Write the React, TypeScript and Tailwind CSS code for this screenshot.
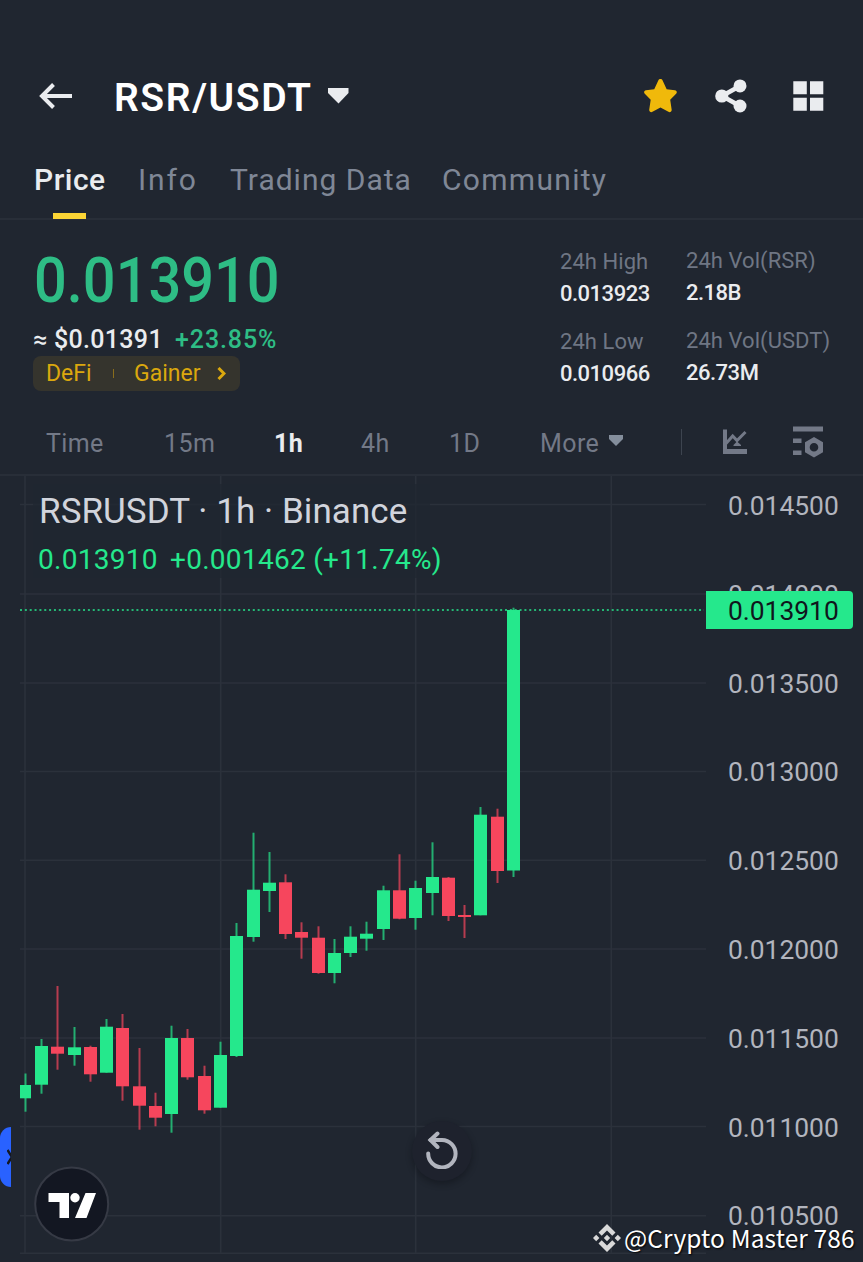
import { useState } from "react";

type Candle = {
  open: number,
  close: number,
  high: number,
  low: number,
  up: boolean,
}

const GREEN = "#25E88C";
const RED = "#F6465D";

//=============  CHART DATA =============
// top of body, bottom of body, wick top, wick bottom (chart pixels)
const rows: [number, number, number, number, boolean][] = [
  [609, 622.3, 597.5, 635.7, true],
  [570, 608.7, 563, 617.7, true],
  [570.7, 577.7, 510, 593.7, false],
  [571.3, 579, 551, 589.7, true],
  [571, 598.3, 569.7, 605.7, false],
  [550.7, 596.7, 543, 596.7, true],
  [552, 610.3, 538, 624.7, false],
  [610.3, 629.7, 572, 653.7, false],
  [630, 641.7, 616.7, 650.3, false],
  [562, 638, 549.7, 656.7, true],
  [562, 601.3, 553, 603.7, false],
  [600, 634.3, 589.7, 637.7, false],
  [579, 631.7, 565.7, 631.7, true],
  [460, 580, 447, 581, true],
  [413.7, 461, 356.7, 465.7, true],
  [406.7, 415, 376, 436, true],
  [406.3, 458, 398.3, 463, false],
  [456, 461.7, 446.3, 482.7, false],
  [461.7, 497, 450.3, 497.7, false],
  [477, 497, 463, 507.3, true],
  [460.7, 477, 450.3, 481, true],
  [457.7, 462.7, 445.7, 474.7, true],
  [414.3, 453, 409.7, 464, true],
  [414.3, 442.7, 378.3, 443.3, false],
  [412, 442, 404.7, 453.7, true],
  [401, 417, 366.3, 439.3, true],
  [401.7, 440, 401, 445, false],
  [439, 441, 429, 462, false],
  [338.7, 439.3, 331, 439.3, true],
  [340.7, 395, 332.7, 407, false],
  [134, 394.5, 131.7, 401, true],
];

const candles: Candle[] = rows.map(([open, close, high, low, up]) => ({ open, close, high, low, up }));

const gridY = [28.5, 118, 207, 295.5, 384.3, 473, 562, 650.5, 739.7];
const gridX = [25, 220.7, 415.7, 611.3];
const axisPrices = ["0.014500", "0.014000", "0.013500", "0.013000", "0.012500", "0.012000", "0.011500", "0.011000", "0.010500"];

const tabs = [
  { name: "Price", cell: "w-[104px]", text: "tracking-[0.5px]" },
  { name: "Info", cell: "w-[92px]", text: "tracking-[1.9px]" },
  { name: "Trading Data", cell: "w-[212px]", text: "tracking-[1px]" },
  { name: "Community", cell: "w-[170px]", text: "tracking-[1.3px]" },
];

const intervals = [
  { name: "Time", cell: "w-[118px]" },
  { name: "15m", cell: "w-[110px]" },
  { name: "1h", cell: "w-[87px]" },
  { name: "4h", cell: "w-[88px]" },
  { name: "1D", cell: "w-[91px]" },
];

//=============  HEADER =============
const Header = () => (
  <header className="flex h-[152px] items-center pt-[40px] pl-[39px] pr-[39px]">
    <svg width="34" height="26" viewBox="0 0 34 26" fill="none" stroke="#EAECEF" strokeWidth="4">
      <path d="M14.5 1.5 3 13l11.5 11.5M3 13h30" />
    </svg>
    <h1 className="ml-[41px] w-[198px] whitespace-nowrap pt-1 text-[39px] font-semibold leading-none tracking-[1.6px] text-white">RSR/USDT</h1>
    <svg className="ml-[16px]" width="21" height="16" viewBox="0 0 21 16" fill="#EAECEF">
      <path d="M0 0H20.500V5L10.500 15.500 0 5Z" />
    </svg>
    <div className="ml-auto flex items-center">
      <svg width="33" height="34" viewBox="0.300 0.600 33.500 34" fill="#F0B90B">
        <path d="M14.8 1.8c.9-1.8 3.500-1.800 4.400 0l4.100 8.900 8.400 1c1.900.3 2.500 2.400 1.200 3.700l-6 6 1.500 10.200c.2 1.900-1.700 3-3.300 2.100L17 29.200l-8.100 4.500c-1.600.9-3.500-.2-3.300-2.100l1.500-10.200-6-6c-1.300-1.300-.7-3.400 1.200-3.700l8.400-1Z" />
      </svg>
      <svg className="ml-[38px]" width="33" height="34" viewBox="0 0 33 34" fill="#EAECEF">
        <path d="M7 17 25 7M7 17l18 10" stroke="#EAECEF" strokeWidth="4.5" />
        <circle cx="6.800" cy="17" r="6.600" />
        <circle cx="25" cy="6.900" r="6.500" />
        <circle cx="25" cy="27" r="6.500" />
      </svg>
      <svg className="ml-[45px]" width="31" height="30" viewBox="0 0 31 30" fill="#EAECEF">
        <path d="M0.300 0.300h13.500v13H0.300zM17 0.300h13.300v13H17zM0.300 16.700h13.500v13H0.300zM17 16.700h13.300v13H17z" />
      </svg>
    </div>
  </header>
)

//=============  PRICE SUMMARY =============
const Stat = ({ label, value }: { label: string, value: string }) => (
  <div className="h-[80px] whitespace-nowrap">
    <p className="text-[22px] leading-[32px] tracking-[0.05px] text-[#6F7684]">{label}</p>
    <p className="text-[22px] font-medium leading-[31px] tracking-[-0.5px] text-[#EAECEF]">{value}</p>
  </div>
)

const Summary = () => (
  <section className="flex h-[190px] pl-[33px]">
    <div className="w-[527px]">
      <p className="mt-[27px] h-[66px] w-[250px] origin-left translate-x-px scale-x-[0.916] whitespace-nowrap text-[63px] font-medium leading-[68px] text-[#2EBD85]">0.013910</p>
      <div className="mt-[12px] flex h-[28px] items-center whitespace-nowrap text-[25px] font-medium leading-none">
        <span className="w-[142px] tracking-[0.3px] text-[#EAECEF]">≈ $0.01391</span>
        <span className="tracking-[0.9px] text-[#2EBD85]">+23.85%</span>
      </div>
      <div className="mt-[3px] flex h-[35px] w-[207px] items-center rounded-lg bg-[#35342D] pl-[13px] text-[23px] leading-none text-[#DBA80E]">
        <span className="w-[67px]">DeFi</span>
        <span className="h-[9px] w-px bg-[#8A6D1B]" />
        <span className="ml-[20px] w-[83px]">Gainer</span>
        <svg width="9" height="13" viewBox="0 0 9 13" fill="none" stroke="#DBA80E" strokeWidth="3">
          <path d="M1.500 1 7 6.500 1.500 12" />
        </svg>
      </div>
    </div>
    <div className="w-[126px] pt-[26px]">
      <Stat label="24h High" value="0.013923" />
      <Stat label="24h Low" value="0.010966" />
    </div>
    <div className="pt-[25px]">
      <Stat label="24h Vol(RSR)" value="2.18B" />
      <Stat label="24h Vol(USDT)" value="26.73M" />
    </div>
  </section>
)

//=============  CHART =============
const Chart = () => (
  <section className="relative flex h-[786px] overflow-hidden font-[Roboto,sans-serif]">
    <svg className="shrink-0" width="706" height="786" viewBox="0 0 706 786">
      {gridY.map((y) => <path key={y} d={`M20 ${y}H706`} stroke="#2B313B" strokeWidth="1.600" />)}
      {gridX.map((x) => <path key={x} d={`M${x} 0V777`} stroke="#2B313B" strokeWidth="1.600" />)}
      <path d="M20 777.300H706" stroke="#2B313B" strokeWidth="1.600" />
      <rect x="33" y="8" width="397" height="94" fill="#202630" fillOpacity="0.700" />
      <path d="M20 134H704" stroke={GREEN} strokeOpacity="0.750" strokeWidth="2" strokeDasharray="2 2.850" />
      {candles.map((c, i) => {
        const x = Math.round(18.75 + i * 16.27)
        const color = c.up ? GREEN : RED
        // first candle is cut by the left edge of the pane
        const left = i === 0 ? 20 : x
        const width = i === 0 ? 11 : 13
        return (
          <g key={i} fill={color}>
            <rect x={x + 5.5} y={c.high} width="2" height={c.low - c.high} opacity="0.700" />
            <rect x={left} y={c.open} width={width} height={c.close - c.open} />
          </g>
        )
      })}
    </svg>
    <div className="-mt-[14px] pl-[22px] text-[26.4px] text-[#B2B5BE]">
      {axisPrices.map((price) => (
        <p key={price} className="h-[88.8px] leading-[89px]">{price}</p>
      ))}
    </div>

    <div className="absolute left-[38px] top-[15px] whitespace-nowrap">
      <p className="ml-px text-[35px] leading-[42px] tracking-[0.06px] text-[#D1D4DC]">RSRUSDT · 1h · Binance</p>
      <p className="mt-[9px] flex text-[28px] leading-[36px] tracking-[0.28px] text-[#25E88C]">
        <span className="w-[132px]">0.013910</span>
        <span>+0.001462 (+11.74%)</span>
      </p>
    </div>
    <p className="absolute left-[706px] top-[115px] h-[38px] w-[147px] rounded-r-[4px] bg-[#25E88C] pl-[22px] text-[26.4px] leading-[40px] text-[#10151C]">0.013910</p>

    <div className="absolute left-0 top-[651px] flex h-[60px] w-[11px] items-center overflow-hidden rounded-l-[11px] bg-[#2962FF]">
      <svg className="ml-[7px] shrink-0" width="8" height="16" viewBox="0 0 8 16" fill="none" stroke="#131722" strokeWidth="2.500">
        <path d="M0.500 1l4.500 7-4.500 7" />
      </svg>
    </div>
    <svg className="absolute left-[34px] top-[690px]" width="76" height="76" viewBox="0 0 76 76">
      <circle cx="37.700" cy="38" r="36.500" fill="#131722" stroke="#363A45" strokeWidth="2" />
      <path d="M14.500 27H35V52H25.500V36H14.500zM51.500 27H62L52.500 52H41z" fill="#fff" />
      <circle cx="41" cy="31.700" r="4.700" fill="#fff" />
    </svg>
    <div className="absolute left-[412px] top-[645px] flex size-[60px] items-center justify-center rounded-full bg-[#1E222D] shadow-[0_3px_6px_rgba(10,12,18,0.4)]">
      <svg className="-mt-[2px]" width="32" height="38" viewBox="0 0 32 38" fill="none" stroke="#B2B5BE" strokeWidth="4" strokeLinecap="round">
        <path d="M2.200 22.500A13.700 13.700 0 1 0 16 9H4.500" strokeLinejoin="round" />
        <path d="M11.500 2.500 4.500 9l7 7" />
      </svg>
    </div>

    <div className="absolute left-[593px] top-[745px] flex items-center whitespace-nowrap text-white">
      <svg width="28" height="28" viewBox="0 0 28 28" fill="#D9D9D9">
        <path d="M14 0l8.500 8.500-3.200 3.200L14 6.400l-5.300 5.300-3.200-3.200zM14 28l8.500-8.500-3.200-3.200L14 21.600l-5.300-5.300-3.200 3.200zM3.200 10.800 6.400 14l-3.200 3.200L0 14zM24.800 10.800 28 14l-3.200 3.200-3.200-3.200zM14 10.800l3.200 3.200-3.200 3.200-3.200-3.200z" />
      </svg>
      <span className="ml-[3px] font-['Noto_Sans_CJK_SC',sans-serif] text-[24.5px] leading-[34px] tracking-[0.12px] [text-shadow:1px_1px_2px_#000]">@Crypto Master 786</span>
    </div>
  </section>
)

const App = () => {
  const [tab, setTab] = useState("Price");
  const [interval, setChartInterval] = useState("1h");

  return (
    <main className="h-[1262px] w-[863px] overflow-hidden bg-[#202630] font-[Roboto,sans-serif]">
      <Header />

      <nav className="flex h-[68px] border-b-2 border-[#282E38] pl-[34px]">
        {tabs.map((item) => (
          <div key={item.name} className={item.cell}>
            <button
              onClick={() => setTab(item.name)}
              className={`flex h-[67px] flex-col items-center whitespace-nowrap pt-[9px] text-[30px] leading-[38px] ${item.text} ${tab === item.name ? "font-medium text-[#EAECEF]" : "text-[#7F8796]"}`}
            >
              {item.name}
              {tab === item.name && <span className="mt-[14px] h-[6px] w-[33px] bg-[#FCD535]" />}
            </button>
          </div>
        ))}
      </nav>

      <Summary />

      <div className="flex h-[66px] items-center border-b-2 border-[#282E38] pl-[46px] text-[25px] tracking-[0.4px] text-[#737987]">
        {intervals.map((item) => (
          <button
            key={item.name}
            onClick={() => setChartInterval(item.name)}
            className={`${item.cell} pt-1 text-left ${interval === item.name ? "font-bold text-[#EAECEF]" : ""}`}
          >
            {item.name}
          </button>
        ))}
        <span className="w-[69px] pt-1">More</span>
        <svg className="mb-1" width="14" height="11" viewBox="0 0 14 11" fill="#848E9C">
          <path d="M0 0h14v4L7 11 0 4z" />
        </svg>
        <span className="ml-[58px] h-[26px] w-px bg-[#3D444F]" />
        <svg className="ml-[41px]" width="25" height="26" viewBox="0 0 25 26" fill="#737987">
          <path d="M0 0.500h4v19.500H24V25H0z" />
          <path d="M3 14.500 9.700 7l4.300 4.500L22.500 3" fill="none" stroke="#737987" strokeWidth="3" />
          <path d="M10.500 17v-1l3.500-3.500 4 3.500v1z" />
        </svg>
        <svg className="ml-[45px]" width="31" height="32" viewBox="0 0 31 32" fill="#737987">
          <path d="M0 0.500h30v5H0zM0 12.500h8.500v4.500H0zM0 24.500h8.500V29H0z" />
          <path fillRule="evenodd" d="M21 11l9 5.200v10.100l-9 5.200-9-5.200V16.200zM21 17a4.300 4.300 0 1 0 0 8.600 4.300 4.300 0 0 0 0-8.600z" />
        </svg>
      </div>

      <Chart />
    </main>
  )
}

export default App;
